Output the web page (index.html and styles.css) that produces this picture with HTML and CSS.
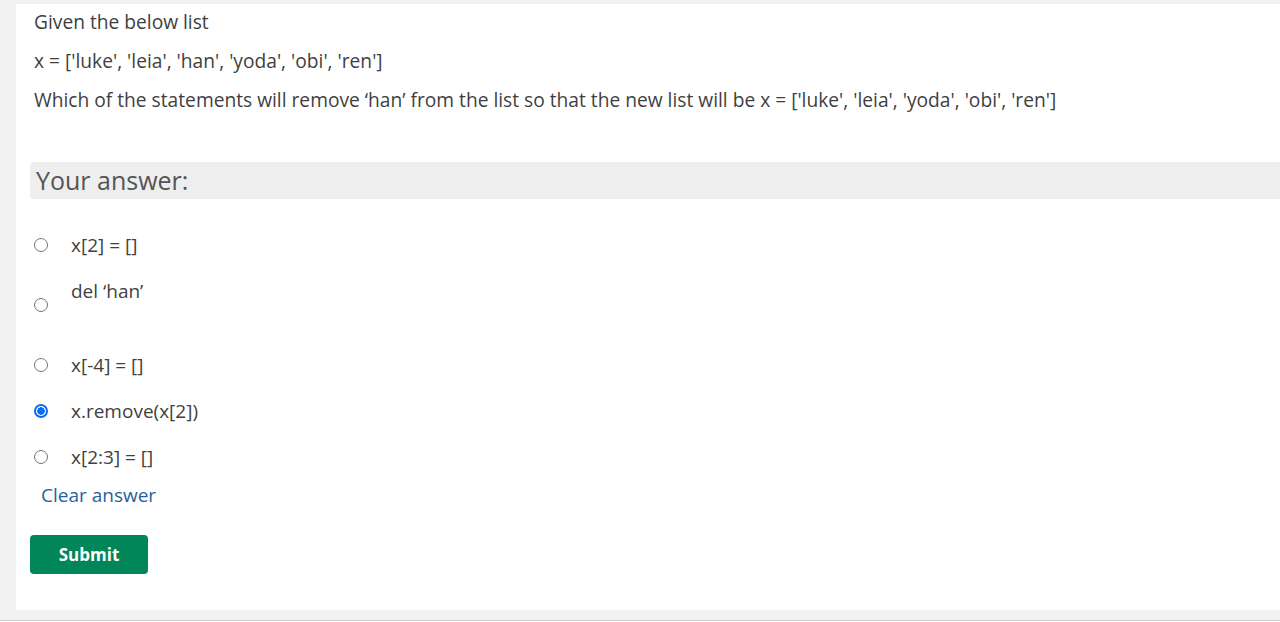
FILE: index.html
```html
<!DOCTYPE html>
<html>
<head>
<meta charset="utf-8">
<link rel="stylesheet" href="styles.css">
</head>
<body>
<div class="page">
  <div class="card">
    <div class="question">
      <p>Given the below list</p>
      <p>x = ['luke', 'leia', 'han', 'yoda', 'obi', 'ren']</p>
      <p>Which of the statements will remove ‘han’ from the list so that the new list will be x = ['luke', 'leia', 'yoda', 'obi', 'ren']</p>
    </div>
    <div class="answer-head">Your answer:</div>
    <div class="options">
      <label class="opt"><span class="radio"></span><span class="txt">x[2] = []</span></label>
      <label class="opt opt-tall"><span class="radio"></span><span class="txt">del ‘han’</span></label>
      <label class="opt"><span class="radio"></span><span class="txt">x[-4] = []</span></label>
      <label class="opt"><span class="radio checked"></span><span class="txt">x.remove(x[2])</span></label>
      <label class="opt"><span class="radio"></span><span class="txt">x[2:3] = []</span></label>
    </div>
    <a class="clear">Clear answer</a>
    <button class="submit">Submit</button>
  </div>
</div>
</body>
</html>
```
FILE: styles.css
```css
html, body {
  margin: 0;
  padding: 0;
}
body {
  background: #ffffff;
  font-family: "Open Sans", "Liberation Sans", sans-serif;
  color: #3f3f3f;
}
.page {
  background: #f2f2f2;
  padding: 4px 0 10px 16px;
  border-bottom: 1px solid #cfcfcf;
}
.card {
  background: #ffffff;
  padding: 4px 0 36px 14px;
}
.question {
  padding-left: 4px;
}
.question p {
  margin: 0 0 12px 0;
  font-size: 19.2px;
  line-height: 27px;
}
.answer-head {
  margin-top: 49px;
  background: #eeeeee;
  border-radius: 4px 0 0 4px;
  height: 37px;
  line-height: 37px;
  padding-left: 6px;
  font-size: 25px;
  color: #555555;
}
.options {
  display: flex;
  flex-direction: column;
  margin-top: 23px;
}
.opt {
  display: flex;
  align-items: center;
  height: 46px;
  font-size: 19px;
  line-height: 26px;
}
.opt-tall {
  height: 74px;
  align-items: flex-start;
}
.opt-tall .radio {
  margin-top: 30px;
}
.opt-tall .txt {
  margin-top: 10px;
}
.radio {
  box-sizing: border-box;
  width: 14px;
  height: 14px;
  border-radius: 50%;
  border: 1px solid #767676;
  margin-left: 4px;
  margin-right: 23px;
  flex: none;
  background: #fff;
}
.radio.checked {
  border: 2px solid #0a6cf0;
  background: radial-gradient(circle, #0a6cf0 0 3.5px, #ffffff 4px);
}
.clear {
  display: block;
  margin-top: 2px;
  margin-left: 11px;
  font-size: 19px;
  line-height: 27px;
  color: #2a5f9e;
}
.submit {
  display: block;
  margin-top: 26px;
  width: 118px;
  height: 39px;
  border: none;
  border-radius: 4px;
  background: #008658;
  color: #ffffff;
  font-family: "Open Sans", "Liberation Sans", sans-serif;
  font-weight: 700;
  font-size: 17px;
}
```
